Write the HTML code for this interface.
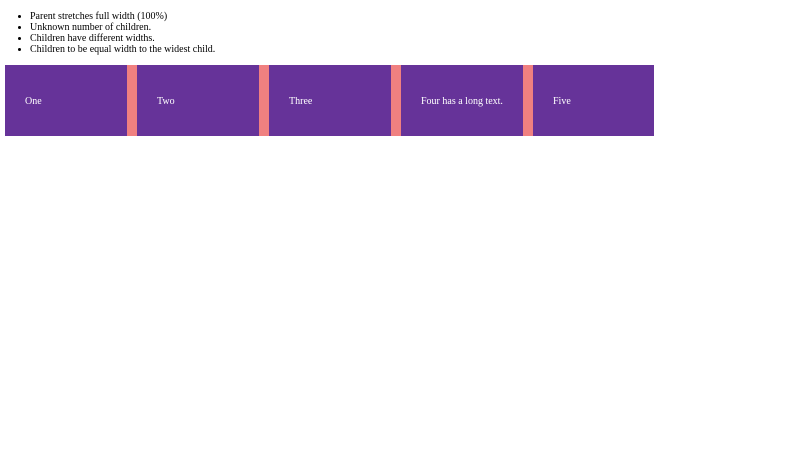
<!DOCTYPE html>
<html><head><style>
body{margin:0;background:#fff;font-family:"Liberation Serif",serif;}
ul{position:absolute;left:0;top:11px;margin:0;padding-left:30px;font-size:10px;line-height:11px;color:#000;}
.wrap{position:absolute;left:5px;top:65px;width:649px;height:71px;background:#f08080;}
.it{position:absolute;top:0;height:71px;width:122px;background:#663399;color:#fff;font-size:10px;line-height:73px;box-sizing:border-box;padding-left:20px;white-space:nowrap;}
</style></head><body>
<ul>
<li>Parent stretches full width (100%)</li>
<li>Unknown number of children.</li>
<li>Children have different widths.</li>
<li>Children to be equal width to the widest child.</li>
</ul>
<div class="wrap">
<div class="it" style="left:0">One</div>
<div class="it" style="left:132px">Two</div>
<div class="it" style="left:264px">Three</div>
<div class="it" style="left:396px">Four has a long text.</div>
<div class="it" style="left:528px;width:121px">Five</div>
</div>
</body></html>
